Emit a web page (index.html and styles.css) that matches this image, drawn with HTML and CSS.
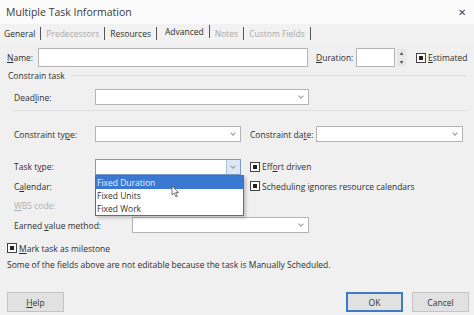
FILE: index.html
```html
<!DOCTYPE html>
<html lang="en">
<head>
  <meta charset="UTF-8" />
  <title>Multiple Task Information</title>
  <link rel="stylesheet" href="styles.css">
</head>
<body>
  <div class="dialog">
    <div class="titlebar">
      <span class="title">Multiple Task Information</span>
      <span class="close">&#x2715;</span>
    </div>

    <div class="tabs">
      <span class="tab">General</span>
      <span class="tab off">Predecessors</span>
      <span class="tab">Resources</span>
      <span class="tab active">Advanced</span>
      <span class="tab off">Notes</span>
      <span class="tab off">Custom Fields</span>
    </div>

    <div class="panel">
      <div class="row row-name">
        <span class="lbl"><u>N</u>ame:</span>
        <div class="box name-box"></div>
        <span class="lbl dur-lbl"><u>D</u>uration:</span>
        <div class="box dur-box"></div>
        <div class="spin">
          <span class="spin-btn">&#9652;</span>
          <span class="spin-btn">&#9662;</span>
        </div>
        <span class="check"></span>
        <span class="lbl"><u>E</u>stimated</span>
      </div>

      <div class="group-head">
        <span>Constrain task</span>
        <span class="rule"></span>
      </div>

      <div class="row row-deadline">
        <span class="lbl col-lbl">Dead<u>l</u>ine:</span>
        <div class="box select deadline-box"><span class="chev"></span></div>
      </div>

      <div class="sep"></div>

      <div class="row row-constraint">
        <span class="lbl col-lbl">Constraint ty<u>p</u>e:</span>
        <div class="box select short-box"><span class="chev"></span></div>
        <span class="lbl date-lbl">Constraint da<u>t</u>e:</span>
        <div class="box select date-box"><span class="chev"></span></div>
      </div>

      <div class="row row-task">
        <span class="lbl col-lbl">Task t<u>y</u>pe:</span>
        <div class="box select short-box open">
          <span class="chev hot"></span>
          <ul class="dropdown">
            <li class="picked">Fixed Duration</li>
            <li>Fixed Units</li>
            <li>Fixed Work</li>
          </ul>
          <svg class="pointer" width="9" height="13" viewBox="0 0 9 13">
            <path d="M1 1 L1 10 L3.2 8 L5 12 L6.4 11.3 L4.7 7.5 L7.6 7.5 Z" fill="#fff" stroke="#555" stroke-width="0.8" stroke-linejoin="round"/>
          </svg>
        </div>
        <span class="check"></span>
        <span class="lbl">Eff<u>o</u>rt driven</span>
      </div>

      <div class="row row-calendar">
        <span class="lbl col-lbl">C<u>a</u>lendar:</span>
        <div class="calendar-gap"></div>
        <span class="check"></span>
        <span class="lbl">Schedulin<u>g</u> ignores resource calendars</span>
      </div>

      <div class="row row-wbs">
        <span class="lbl col-lbl off"><u>W</u>BS code:</span>
      </div>

      <div class="row row-earned">
        <span class="lbl col-lbl">Earned <u>v</u>alue method:</span>
        <div class="box select earned-box"><span class="chev"></span></div>
      </div>

      <div class="row row-milestone">
        <span class="check"></span>
        <span class="lbl"><u>M</u>ark task as milestone</span>
      </div>

      <p class="note">Some of the fields above are not editable because the task is Manually Scheduled.</p>

      <div class="buttons">
        <button class="btn"><u>H</u>elp</button>
        <span class="spacer"></span>
        <button class="btn default">OK</button>
        <button class="btn">Cancel</button>
      </div>
    </div>
  </div>
</body>
</html>
```

FILE: styles.css
```css
body {
  margin: 0;
  background: #f0f0f0;
  font-family: 'Open Sans', 'Noto Sans', sans-serif;
  font-size: 8.5px;
  color: #2e2e2e;
}
.dialog {
  width: 474px;
  height: 315px;
  overflow: hidden;
}
.titlebar {
  height: 24px;
  background: #fbfbfb;
  display: flex;
  align-items: center;
  padding: 0 8px 0 6px;
}
.title {
  font-size: 10.5px;
  color: #3a3a3a;
  flex: 1;
}
.close {
  font-size: 10px;
  color: #444;
}
.tabs {
  height: 18px;
  display: flex;
  align-items: flex-end;
  padding-left: 4px;
  background: #f2f2f2;
}
.tab {
  padding: 0 5px 0 0;
  margin-right: 5px;
  line-height: 13px;
  border-right: 1px solid #555;
  margin-bottom: 2px;
}
.tab.off {
  color: #a9a9a9;
}
.tab.active {
  margin-bottom: 4px;
  padding-left: 3px;
}
.panel {
  padding: 0 0 0 7px;
}
.row {
  display: flex;
  align-items: center;
  white-space: nowrap;
}
.lbl u {
  text-decoration: underline;
}
.box {
  background: #fff;
  border: 1px solid #b4b4b4;
  box-sizing: border-box;
  position: relative;
}
.row-name {
  margin-top: 6px;
  height: 19px;
}
.name-box {
  width: 270px;
  height: 19px;
  margin: 0 8px 0 5px;
}
.dur-lbl {
  width: 40px;
}
.dur-box {
  width: 39px;
  height: 19px;
}
.spin {
  width: 9px;
  height: 17px;
  margin: 0 10px 0 2px;
  display: flex;
  flex-direction: column;
  gap: 1px;
}
.spin-btn {
  flex: 1;
  background: #e6e6e6;
  font-size: 6px;
  line-height: 8px;
  text-align: center;
  color: #444;
}
.check {
  width: 10px;
  height: 10px;
  border: 1px solid #444;
  box-sizing: border-box;
  background: #fff;
  margin-right: 2px;
  position: relative;
}
.check::after {
  content: "";
  position: absolute;
  left: 2px;
  top: 2px;
  width: 4px;
  height: 4px;
  background: #222;
}
.group-head {
  display: flex;
  align-items: center;
  height: 13px;
  margin-top: 2px;
  padding-left: 1px;
}
.rule {
  flex: 1;
  height: 1px;
  background: #dedede;
  margin: 0 7px 0 6px;
}
.col-lbl {
  width: 81px;
  padding-left: 7px;
}
.col-lbl.off, .lbl.off {
  color: #b0b0b0;
}
.select .chev {
  position: absolute;
  right: 0;
  top: 0;
  bottom: 0;
  width: 13px;
}
.select .chev::after {
  content: "";
  position: absolute;
  left: 4px;
  top: 4px;
  width: 3px;
  height: 3px;
  border-right: 1px solid #999;
  border-bottom: 1px solid #999;
  transform: rotate(45deg);
}
.row-deadline {
  margin-top: 7px;
  height: 16px;
}
.deadline-box {
  width: 214px;
  height: 16px;
}
.sep {
  height: 1px;
  background: #dedede;
  margin: 5px 8px 0 6px;
}
.row-constraint {
  margin-top: 15px;
  height: 16px;
}
.short-box {
  width: 146px;
  height: 16px;
}
.date-lbl {
  width: 66px;
  margin-left: 9px;
}
.date-box {
  width: 147px;
  height: 16px;
}
.row-task {
  margin-top: 17px;
  height: 15px;
}
.row-task .short-box {
  height: 16px;
  border-color: #7a9cc4;
  margin-right: 9px;
}
.select .chev.hot {
  background: #dbe8f5;
  border-left: 1px solid #a9c3e0;
}
.dropdown {
  position: absolute;
  left: -1px;
  top: 15px;
  width: 147px;
  margin: 0;
  padding: 0;
  list-style: none;
  background: #fff;
  border: 1px solid #6b6b6b;
  box-shadow: 2px 2px 3px rgba(0,0,0,0.2);
  z-index: 2;
}
.dropdown li {
  height: 13px;
  line-height: 13px;
  padding-left: 1px;
  color: #333;
}
.dropdown li.picked {
  background: #3b78d1;
  color: #e8f0fb;
}
.pointer {
  position: absolute;
  left: 75px;
  top: 25px;
  z-index: 3;
}
.row-calendar {
  margin-top: 5px;
  height: 14px;
}
.calendar-gap {
  width: 155px;
}
.row-wbs {
  margin-top: 5px;
  height: 14px;
}
.row-earned {
  margin-top: 5px;
  height: 16px;
}
.row-earned .col-lbl {
  width: 118px;
}
.earned-box {
  width: 177px;
  height: 16px;
}
.row-milestone {
  margin-top: 9px;
  height: 12px;
}
.note {
  margin: 4px 0 0;
  line-height: 13px;
}
.buttons {
  display: flex;
  margin-top: 21px;
  padding-right: 5px;
}
.spacer {
  flex: 1;
}
.btn {
  width: 57px;
  height: 20px;
  background: #e1e1e1;
  border: 1px solid #c4c4c4;
  font-family: inherit;
  font-size: 8.5px;
  color: #333;
  padding: 0;
}
.btn.default {
  border: 2px solid #3d7bc4;
  margin-right: 9px;
}
```
